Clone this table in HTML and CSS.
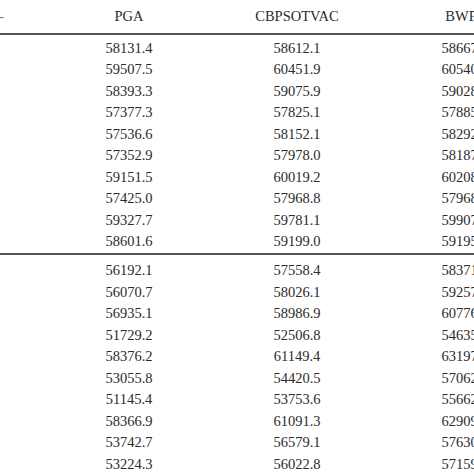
FILE: index.html
```html
<!DOCTYPE html>
<html lang="en">
<head>
<meta charset="utf-8">
<title>Results table</title>
<link rel="stylesheet" href="styles.css">
</head>
<body>
<table class="results">
  <colgroup>
    <col class="c-label">
    <col class="c-num">
    <col class="c-num">
    <col class="c-num">
  </colgroup>
  <thead>
    <tr>
      <th class="label"><div class="label-in">Instance-</div></th>
      <th>PGA</th>
      <th>CBPSOTVAC</th>
      <th class="last">BWP</th>
    </tr>
  </thead>
  <tbody class="group">
    <tr><td></td><td>58131.4</td><td>58612.1</td><td>58667.3</td></tr>
    <tr><td></td><td>59507.5</td><td>60451.9</td><td>60540.8</td></tr>
    <tr><td></td><td>58393.3</td><td>59075.9</td><td>59028.4</td></tr>
    <tr><td></td><td>57377.3</td><td>57825.1</td><td>57885.2</td></tr>
    <tr><td></td><td>57536.6</td><td>58152.1</td><td>58292.6</td></tr>
    <tr><td></td><td>57352.9</td><td>57978.0</td><td>58187.9</td></tr>
    <tr><td></td><td>59151.5</td><td>60019.2</td><td>60208.1</td></tr>
    <tr><td></td><td>57425.0</td><td>57968.8</td><td>57968.5</td></tr>
    <tr><td></td><td>59327.7</td><td>59781.1</td><td>59907.4</td></tr>
    <tr><td></td><td>58601.6</td><td>59199.0</td><td>59195.7</td></tr>
  </tbody>
  <tbody class="group">
    <tr><td></td><td>56192.1</td><td>57558.4</td><td>58371.5</td></tr>
    <tr><td></td><td>56070.7</td><td>58026.1</td><td>59257.2</td></tr>
    <tr><td></td><td>56935.1</td><td>58986.9</td><td>60776.0</td></tr>
    <tr><td></td><td>51729.2</td><td>52506.8</td><td>54635.1</td></tr>
    <tr><td></td><td>58376.2</td><td>61149.4</td><td>63197.4</td></tr>
    <tr><td></td><td>53055.8</td><td>54420.5</td><td>57062.8</td></tr>
    <tr><td></td><td>51145.4</td><td>53753.6</td><td>55662.3</td></tr>
    <tr><td></td><td>58366.9</td><td>61091.3</td><td>62909.6</td></tr>
    <tr><td></td><td>53742.7</td><td>56579.1</td><td>57630.7</td></tr>
    <tr><td></td><td>53224.3</td><td>56022.8</td><td>57159.9</td></tr>
  </tbody>
</table>
</body>
</html>
```

FILE: styles.css
```css
html, body {
  margin: 0;
  padding: 0;
  background: #ffffff;
}

body {
  width: 474px;
  height: 474px;
  overflow: hidden;
  font-family: "Liberation Serif", "Times New Roman", serif;
  font-size: 14.5px;
  color: #2b2b2b;
}

.results {
  border-collapse: collapse;
  table-layout: fixed;
  width: 549px;
}

.c-label {
  width: 45px;
}

.c-num {
  width: 168px;
}

.results th,
.results td {
  padding: 0;
  line-height: 21.5px;
  height: 21.5px;
  text-align: center;
  font-weight: normal;
  white-space: nowrap;
}

.results thead th {
  padding-top: 5.5px;
  padding-bottom: 6px;
  border-bottom: 2px solid #555555;
}

.results thead th.last {
  padding-right: 8px;
}

.results th.label {
  overflow: visible;
}

.label-in {
  display: flex;
  justify-content: flex-end;
  padding-right: 41px;
  color: #777777;
}

.group:first-of-type tr:first-child td {
  padding-top: 2.5px;
}

.group tr:last-child td {
  border-bottom: 2px solid #555555;
}

.group + .group tr:first-child td {
  padding-top: 5.5px;
}

.group + .group tr:last-child td {
  border-bottom: none;
}
```
